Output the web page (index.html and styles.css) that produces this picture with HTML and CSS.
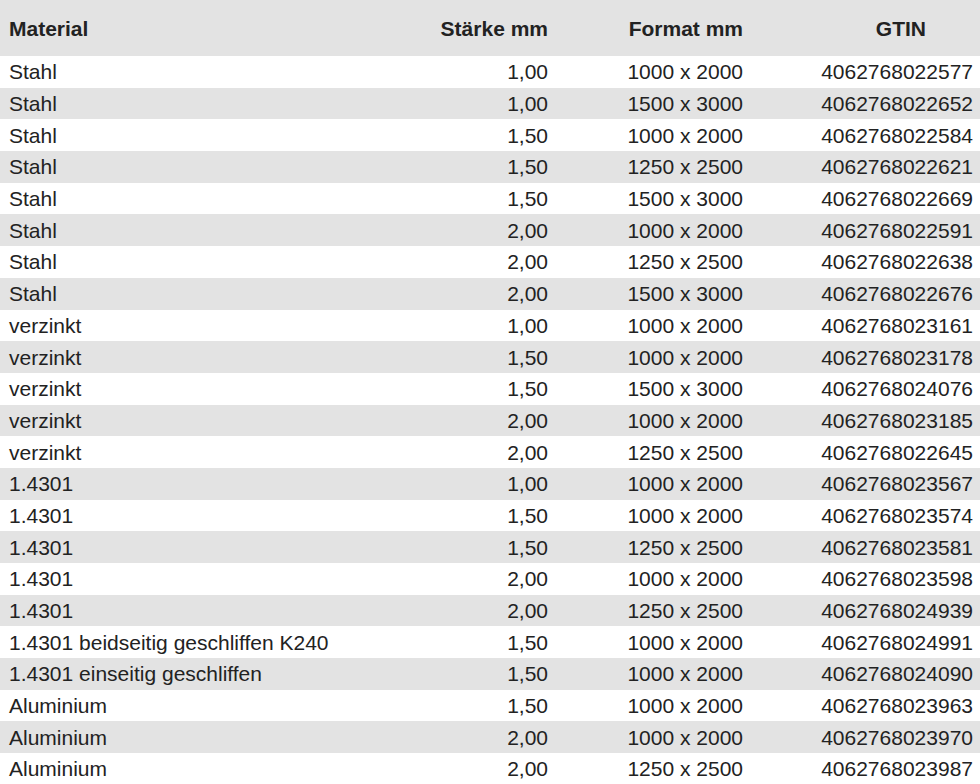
FILE: index.html
```html
<!DOCTYPE html>
<html lang="de">
<head>
<meta charset="utf-8">
<title>Blechtafeln</title>
<link rel="stylesheet" href="styles.css">
</head>
<body>
<table class="spec">
  <colgroup>
    <col class="c-mat"><col class="c-st"><col class="c-fmt"><col class="c-gtin">
  </colgroup>
  <thead>
    <tr><th class="l">Material</th><th class="r">Stärke mm</th><th class="r">Format mm</th><th class="gt">GTIN</th></tr>
  </thead>
  <tbody>
    <tr><td>Stahl</td><td class="r">1,00</td><td class="r">1000 x 2000</td><td class="g">4062768022577</td></tr>
    <tr><td>Stahl</td><td class="r">1,00</td><td class="r">1500 x 3000</td><td class="g">4062768022652</td></tr>
    <tr><td>Stahl</td><td class="r">1,50</td><td class="r">1000 x 2000</td><td class="g">4062768022584</td></tr>
    <tr><td>Stahl</td><td class="r">1,50</td><td class="r">1250 x 2500</td><td class="g">4062768022621</td></tr>
    <tr><td>Stahl</td><td class="r">1,50</td><td class="r">1500 x 3000</td><td class="g">4062768022669</td></tr>
    <tr><td>Stahl</td><td class="r">2,00</td><td class="r">1000 x 2000</td><td class="g">4062768022591</td></tr>
    <tr><td>Stahl</td><td class="r">2,00</td><td class="r">1250 x 2500</td><td class="g">4062768022638</td></tr>
    <tr><td>Stahl</td><td class="r">2,00</td><td class="r">1500 x 3000</td><td class="g">4062768022676</td></tr>
    <tr><td>verzinkt</td><td class="r">1,00</td><td class="r">1000 x 2000</td><td class="g">4062768023161</td></tr>
    <tr><td>verzinkt</td><td class="r">1,50</td><td class="r">1000 x 2000</td><td class="g">4062768023178</td></tr>
    <tr><td>verzinkt</td><td class="r">1,50</td><td class="r">1500 x 3000</td><td class="g">4062768024076</td></tr>
    <tr><td>verzinkt</td><td class="r">2,00</td><td class="r">1000 x 2000</td><td class="g">4062768023185</td></tr>
    <tr><td>verzinkt</td><td class="r">2,00</td><td class="r">1250 x 2500</td><td class="g">4062768022645</td></tr>
    <tr><td>1.4301</td><td class="r">1,00</td><td class="r">1000 x 2000</td><td class="g">4062768023567</td></tr>
    <tr><td>1.4301</td><td class="r">1,50</td><td class="r">1000 x 2000</td><td class="g">4062768023574</td></tr>
    <tr><td>1.4301</td><td class="r">1,50</td><td class="r">1250 x 2500</td><td class="g">4062768023581</td></tr>
    <tr><td>1.4301</td><td class="r">2,00</td><td class="r">1000 x 2000</td><td class="g">4062768023598</td></tr>
    <tr><td>1.4301</td><td class="r">2,00</td><td class="r">1250 x 2500</td><td class="g">4062768024939</td></tr>
    <tr><td>1.4301 beidseitig geschliffen K240</td><td class="r">1,50</td><td class="r">1000 x 2000</td><td class="g">4062768024991</td></tr>
    <tr><td>1.4301 einseitig geschliffen</td><td class="r">1,50</td><td class="r">1000 x 2000</td><td class="g">4062768024090</td></tr>
    <tr><td>Aluminium</td><td class="r">1,50</td><td class="r">1000 x 2000</td><td class="g">4062768023963</td></tr>
    <tr><td>Aluminium</td><td class="r">2,00</td><td class="r">1000 x 2000</td><td class="g">4062768023970</td></tr>
    <tr><td>Aluminium</td><td class="r">2,00</td><td class="r">1250 x 2500</td><td class="g">4062768023987</td></tr>
  </tbody>
</table>
</body>
</html>
```

FILE: styles.css
```css
html, body {
  margin: 0;
  padding: 0;
  background: #ffffff;
}
body {
  font-family: "Liberation Sans", Arial, Helvetica, sans-serif;
  color: #222222;
  overflow: hidden;
}
.spec {
  width: 980px;
  border-collapse: collapse;
  table-layout: fixed;
  font-size: 21px;
}
.c-mat { width: 330px; }
.c-st { width: 226px; }
.c-fmt { width: 195px; }
.c-gtin { width: 229px; }
.spec th {
  height: 56px;
  padding: 0 8px 0 9px;
  font-weight: bold;
  background: #e3e3e3;
  vertical-align: middle;
  white-space: nowrap;
  line-height: 1;
}
.spec td {
  height: 31.7px;
  padding: 0 8px 0 9px;
  line-height: 1;
  vertical-align: middle;
  white-space: nowrap;
  box-sizing: border-box;
}
.spec tbody tr:nth-child(even) td {
  background: #e3e3e3;
}
.l { text-align: left; }
.r { text-align: right; }
.spec td.g { text-align: right; padding-right: 7px; }
.spec th.gt { text-align: right; padding-right: 54px; }
```
